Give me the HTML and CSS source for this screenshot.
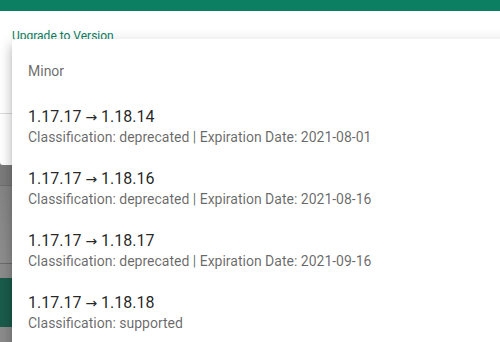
FILE: index.html
```html
<!DOCTYPE html>
<html lang="en">

<head>
	<meta charset="UTF-8">
	<title>Upgrade</title>
	<link rel="stylesheet" href="styles.css">
</head>

<body>
	<div class="topbar"></div>
	<div class="panel">
		<div class="field">
			<label class="field-label">Upgrade to Version</label>
		</div>
	</div>
	<div class="backdrop">
		<div class="row row-a"></div>
		<div class="row row-b"></div>
		<div class="btn-strip"></div>
	</div>

	<!-- 版本下拉菜单 -->
	<div class="menu">
		<div class="subheader">Minor</div>
		<div class="item">
			<div class="title">1.17.17 <span class="arrow">→</span> 1.18.14</div>
			<div class="subtitle">Classification: deprecated | Expiration Date: 2021-08-01</div>
		</div>
		<div class="item">
			<div class="title">1.17.17 <span class="arrow">→</span> 1.18.16</div>
			<div class="subtitle">Classification: deprecated | Expiration Date: 2021-08-16</div>
		</div>
		<div class="item">
			<div class="title">1.17.17 <span class="arrow">→</span> 1.18.17</div>
			<div class="subtitle">Classification: deprecated | Expiration Date: 2021-09-16</div>
		</div>
		<div class="item">
			<div class="title">1.17.17 <span class="arrow">→</span> 1.18.18</div>
			<div class="subtitle">Classification: supported</div>
		</div>
	</div>
</body>

</html>
```

FILE: styles.css
```css
html,
body {
	margin: 0;
	padding: 0;
	height: 342px;
	overflow: hidden;
	background-color: #8c8c8c;
	font-family: Roboto, "Liberation Sans", sans-serif;
}

.topbar {
	height: 11px;
	background-color: #0c7f63;
}

.panel {
	height: 154px;
	background-color: #FFF;
	border-bottom-left-radius: 3px;
	position: relative;
}

.panel::after {
	content: "";
	position: absolute;
	left: 0;
	right: 0;
	top: 102px;
	height: 1px;
	background-color: #dcdcdc;
}

.field {
	padding: 17px 12px 0;
}

.field-label {
	display: block;
	font-size: 12px;
	line-height: 16px;
	color: #0c7f63;
}

.backdrop {
	height: 177px;
}

.row-a {
	height: 20px;
	border-bottom: 1px solid #6f6f6f;
	background-color: #7b7b7b;
}

.row-b {
	height: 77px;
	border-bottom: 1px solid #6c6c6c;
	background: linear-gradient(#858585, #8e8e8e);
}

.btn-strip {
	height: 49px;
	margin-top: 14px;
	background-color: #1a5c4b;
}

.menu {
	position: absolute;
	left: 12px;
	top: 39px;
	width: 500px;
	height: 320px;
	padding-top: 8px;
	box-sizing: border-box;
	background-color: #FFF;
	border-radius: 4px;
	box-shadow: 0 5px 5px -3px rgba(0, 0, 0, .2), 0 8px 10px 1px rgba(0, 0, 0, .14), 0 3px 14px 2px rgba(0, 0, 0, .12);
}

.subheader {
	height: 48px;
	line-height: 48px;
	padding: 0 16px;
	font-size: 14px;
	color: rgba(0, 0, 0, .6);
}

.item {
	height: 62px;
	padding: 12px 16px;
	box-sizing: border-box;
}

.title {
	font-size: 16px;
	line-height: 19px;
	color: rgba(0, 0, 0, .87);
	margin-bottom: 2px;
	white-space: nowrap;
}

.title .arrow {
	font-family: "DejaVu Sans", sans-serif;
	font-size: 14px;
}

.subtitle {
	font-size: 14px;
	line-height: 17px;
	color: rgba(0, 0, 0, .6);
	white-space: nowrap;
}
```
